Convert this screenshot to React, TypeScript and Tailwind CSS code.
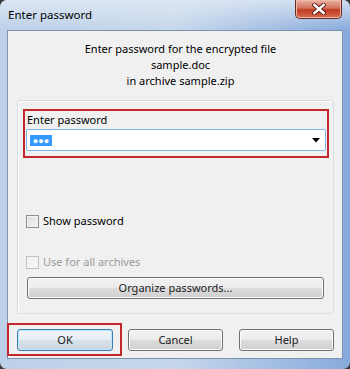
const btn =
  "flex h-[22px] items-center justify-center rounded-[3px] border border-[#707070] bg-[linear-gradient(to_bottom,#f2f2f2_0%,#ebebeb_50%,#dddddd_50%,#cfcfcf_100%)] shadow-[inset_0_0_0_1px_#fcfcfc] text-[11px] text-[#1b1b1b]";

function Checkbox({ disabled }: { disabled?: boolean }) {
  return (
    <div
      className={
        disabled
          ? "h-[13px] w-[13px] border border-[#c2c2c2] bg-[#f4f4f4]"
          : "h-[13px] w-[13px] border border-[#8e8f8f] bg-[linear-gradient(135deg,#dcdcdc,#f7f7f7)] shadow-[inset_0_0_0_1px_#f4f4f4]"
      }
    />
  );
}

export default function App() {
  return (
    <div className="h-[369px] w-[350px] bg-[#3a3a3a] font-['Noto_Sans',sans-serif]">
      <div className="flex h-full w-full flex-col rounded-[7px] bg-linear-to-r from-[#bcd0e8] via-[#c6d7eb] to-[#86aadb]">
        {/* title bar */}
        <div className="flex h-[30px] items-start justify-between rounded-t-[7px] bg-linear-to-b from-[#e3ebf5]/80 to-transparent">
          <span className="pl-[8px] pt-[7px] text-[11.5px] leading-[16px] text-black">Enter password</span>
          <div className="mr-[8px] flex h-[19px] w-[47px] items-center justify-center rounded-b-[5px] border border-t-0 border-[#6b2a20] bg-[linear-gradient(to_bottom,#eab3a4_0%,#d4735e_45%,#c23a22_55%,#d56f55_100%)] shadow-[inset_0_0_0_1px_#f1b9aa]">
            <svg width="14" height="12" viewBox="0 0 14 12">
              <path d="M2.5 2 L11.5 10 M11.5 2 L2.5 10" stroke="#5a1a10" strokeWidth="4.4" strokeLinecap="square" />
              <path d="M2.5 2 L11.5 10 M11.5 2 L2.5 10" stroke="#ffffff" strokeWidth="2.6" strokeLinecap="square" />
            </svg>
          </div>
        </div>

        {/* client area */}
        <div className="mx-[7px] flex h-[329px] flex-col border border-[#7d93ad] bg-[#f0f0f0] text-[11px] text-black">
          <div className="flex flex-col items-center pl-[11px] pt-[10px] leading-[16px]">
            <span>Enter password for the encrypted file</span>
            <span>sample.doc</span>
            <span>in archive sample.zip</span>
          </div>

          <div className="ml-[9px] mr-[8px] mt-[11px] flex h-[214px] flex-col rounded-[3px] border border-[#d5dfe5] shadow-[inset_1px_1px_0_#ffffff]">
            <div className="ml-[5px] mr-[4px] mt-[8px] flex flex-col border-2 border-[#c1272d] px-[1px] pb-[5px] pt-[1px]">
              <span className="pl-[1px] leading-[16px]">Enter password</span>
              <div className="mt-[1px] flex h-[22px] items-center justify-between rounded-[2px] border border-[#7eb4ea] bg-white pl-[3px] pr-[5px]">
                <span className="flex h-[11px] w-[22px] items-center justify-center bg-[#3399ff] text-[9px] leading-none tracking-[0px] text-white">
                  ●●●
                </span>
                <svg width="8" height="5" viewBox="0 0 8 5">
                  <path d="M0 0 H8 L4 4.5 Z" fill="#000" />
                </svg>
              </div>
            </div>

            <div className="ml-[8px] mt-[55px] flex h-[16px] items-center gap-[4px]">
              <Checkbox />
              <span>Show password</span>
            </div>

            <div className="ml-[8px] mt-[25px] flex h-[16px] items-center gap-[4px]">
              <Checkbox disabled />
              <span className="text-[#9a9a9a]">Use for all archives</span>
            </div>

            <div className={`mx-[9px] mt-[7px] ${btn}`}>Organize passwords...</div>
          </div>

          <div className="mt-[15px] flex pl-[9px]">
            <div className="relative">
              <div className="pointer-events-none absolute -bottom-[5px] -left-[10px] -right-[9px] -top-[6px] border-2 border-[#c1272d]" />
              <div className="flex h-[22px] w-[96px] items-center justify-center rounded-[3px] border border-[#3c7fb1] bg-[linear-gradient(to_bottom,#f0f5f9_0%,#e6edf2_50%,#d8e2e9_50%,#ccd8e1_100%)] shadow-[inset_0_0_0_1px_#bfe3f8] text-[11px] text-[#1b1b1b]">
                OK
              </div>
            </div>
            <div className={`ml-[15px] w-[95px] ${btn}`}>Cancel</div>
            <div className={`ml-[16px] w-[95px] ${btn}`}>Help</div>
          </div>
        </div>
      </div>
    </div>
  );
}
